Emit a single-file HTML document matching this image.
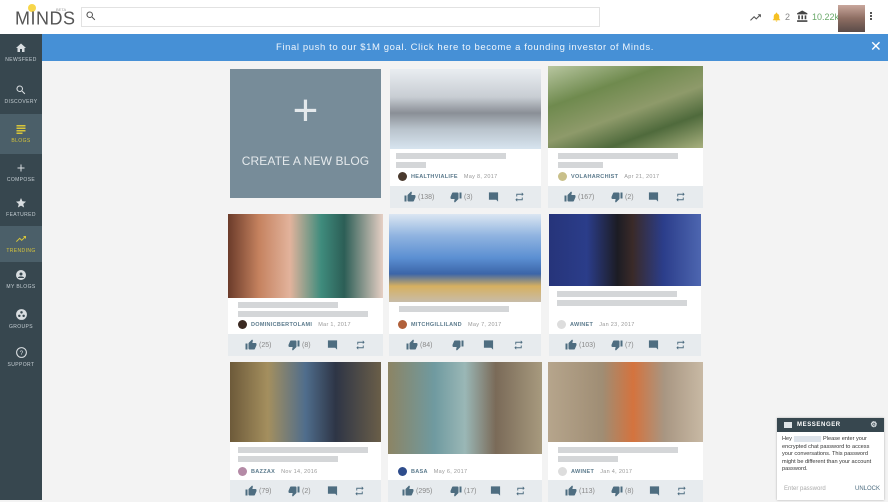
<!DOCTYPE html>
<html><head><meta charset="utf-8"><style>
*{margin:0;padding:0;box-sizing:border-box}
body{width:888px;height:500px;overflow:hidden;background:#f3f3f3;font-family:"Liberation Sans",sans-serif;position:relative}
.abs{position:absolute}
#top{left:0;top:0;width:888px;height:34px;background:#fff}
#side{left:0;top:34px;width:42px;height:466px;background:#37474f}
.nav{position:absolute;left:0;width:42px;text-align:center;color:#c5ced3;font-size:5px;letter-spacing:.4px}
.nav.on{background:#4b5f69;color:#d7c53a}
.nav svg{display:block;margin:0 auto 3px}
#banner{left:42px;top:34px;width:846px;height:27px;background:#4690d6;color:#eef5fc;font-size:9.5px;text-align:center;line-height:27px;letter-spacing:.6px}
.card{position:absolute;background:#fff}
.img{position:absolute;left:0;top:0;width:100%}
.bar{position:absolute;height:6px;background:#d4d6d8}
.auth{position:absolute;font-size:5.5px;font-weight:bold;color:#5b7a8c;letter-spacing:.3px;white-space:nowrap}
.auth span{font-weight:normal;color:#999;margin-left:6px}
.auth i{display:inline-block;width:9px;height:9px;border-radius:50%;vertical-align:middle;margin-right:4px}
.act{position:absolute;left:0;width:100%;background:#e7ebee;font-size:7px;color:#888}
.act div{position:absolute;top:50%;transform:translateY(-50%);white-space:nowrap;display:flex;align-items:center}
.act svg{fill:#4e6d80;margin-right:2px}
</style></head><body>
<div id="top" class="abs">
  <div class="abs" style="left:28px;top:4px;width:8px;height:8px;border-radius:50%;background:#f7d64a"></div>
  <div class="abs" style="left:15px;top:8px;font-size:18px;color:#555;letter-spacing:.5px;font-weight:300;transform:scaleY(1.05)">MINDS</div>
  <div class="abs" style="left:56px;top:7px;font-size:4px;color:#999">BETA</div>
  <div class="abs" style="left:81px;top:7px;width:519px;height:20px;border:1px solid #e2e2e2;background:#fff"></div>
  <svg class="abs" style="left:85px;top:10px" width="12" height="12" viewBox="0 0 24 24"><path fill="#555" d="M15.5 14h-.8l-.3-.3A6.5 6.5 0 1 0 9.5 16a6.5 6.5 0 0 0 4.2-1.6l.3.3v.8l5 5 1.5-1.5-5-5zm-6 0a4.5 4.5 0 1 1 0-9 4.5 4.5 0 0 1 0 9z"/></svg>
  <svg class="abs" style="left:749px;top:11px" width="13" height="13" viewBox="0 0 24 24"><path fill="#555" d="M16 6l2.3 2.3-4.9 4.9-4-4L2 16.6 3.4 18l6-6 4 4 6.3-6.3L22 12V6z"/></svg>
  <svg class="abs" style="left:771px;top:11px" width="11" height="12" viewBox="0 0 24 24"><path fill="#f5c023" d="M12 22a2 2 0 0 0 2-2h-4a2 2 0 0 0 2 2zm6-6v-5c0-3-1.6-5.6-4.5-6.3V4a1.5 1.5 0 0 0-3 0v.7C7.6 5.4 6 8 6 11v5l-2 2v1h16v-1z"/></svg>
  <div class="abs" style="left:785px;top:12px;font-size:9px;color:#888">2</div>
  <svg class="abs" style="left:796px;top:10px" width="13" height="13" viewBox="0 0 24 24"><path fill="#444" d="M4 10v7h3v-7zm6 0v7h3v-7zM2 22h19v-3H2zm14-12v7h3v-7zM11.5 1L2 6v2h19V6z"/></svg>
  <div class="abs" style="left:812px;top:12px;font-size:9px;color:#6aa96a">10.22k</div>
  <div class="abs" style="left:838px;top:5px;width:27px;height:27px;background:linear-gradient(#c9a79c,#8d6d62 50%,#5a4b48)"></div>
  <div class="abs" style="left:870px;top:12px;width:2px;height:2px;background:#555;box-shadow:0 3px #555,0 6px #555"></div>
</div>
<div id="side" class="abs">
  <div class="nav" style="top:8px;height:40px"><svg width="12" height="12" viewBox="0 0 24 24"><path fill="#d9dee1" d="M10 20v-6h4v6h5v-8h3L12 3 2 12h3v8z"/></svg>NEWSFEED</div>
  <div class="nav" style="top:48px;height:40px;padding-top:2px"><svg width="12" height="12" viewBox="0 0 24 24"><path fill="#d9dee1" d="M15.5 14h-.8l-.3-.3A6.5 6.5 0 1 0 9.5 16a6.5 6.5 0 0 0 4.2-1.6l.3.3v.8l5 5 1.5-1.5-5-5zm-6 0a4.5 4.5 0 1 1 0-9 4.5 4.5 0 0 1 0 9z"/></svg>DISCOVERY</div>
  <div class="nav on" style="top:80px;height:40px;padding-top:9px"><svg width="12" height="12" viewBox="0 0 24 24"><path fill="#d7c53a" d="M3 4h18v3H3zm0 5h18v3H3zm0 5h18v3H3zm0 5h12v3H3z"/></svg>BLOGS</div>
  <div class="nav" style="top:120px;height:36px;padding-top:8px"><svg width="12" height="12" viewBox="0 0 24 24"><path fill="#d9dee1" d="M19 13h-6v6h-2v-6H5v-2h6V5h2v6h6z"/></svg>COMPOSE</div>
  <div class="nav" style="top:156px;height:36px;padding-top:7px"><svg width="12" height="12" viewBox="0 0 24 24"><path fill="#d9dee1" d="M12 17.3L18.2 21l-1.6-7L22 9.2l-7.2-.6L12 2 9.2 8.6 2 9.2 7.5 14l-1.7 7z"/></svg>FEATURED</div>
  <div class="nav on" style="top:192px;height:36px;padding-top:7px"><svg width="12" height="12" viewBox="0 0 24 24"><path fill="#d7c53a" d="M16 6l2.3 2.3-4.9 4.9-4-4L2 16.6 3.4 18l6-6 4 4 6.3-6.3L22 12V6z"/></svg>TRENDING</div>
  <div class="nav" style="top:228px;height:36px;padding-top:7px"><svg width="12" height="12" viewBox="0 0 24 24"><circle cx="12" cy="12" r="10" fill="#d9dee1"/><circle cx="12" cy="10" r="3" fill="#37474f"/><path fill="#37474f" d="M6 17c2-3 10-3 12 0v1H6z"/></svg>MY BLOGS</div>
  <div class="nav" style="top:264px;height:40px;padding-top:10px"><svg width="13" height="13" viewBox="0 0 24 24"><circle cx="12" cy="12" r="10" fill="#d9dee1"/><circle cx="12" cy="8" r="2.3" fill="#37474f"/><circle cx="8" cy="14.5" r="2.3" fill="#37474f"/><circle cx="16" cy="14.5" r="2.3" fill="#37474f"/></svg>GROUPS</div>
  <div class="nav" style="top:304px;height:40px;padding-top:8px"><svg width="13" height="13" viewBox="0 0 24 24"><circle cx="12" cy="12" r="9" fill="none" stroke="#d9dee1" stroke-width="2"/><text x="12" y="16.5" font-size="12" text-anchor="middle" fill="#d9dee1" font-family="Liberation Sans">?</text></svg>SUPPORT</div>
</div>
<div id="banner" class="abs">Final push to our $1M goal. Click here to become a founding investor of Minds.</div>
<div class="abs" style="left:870px;top:38px;color:#fff;font-size:14px">✕</div>

<div class="abs" style="left:230px;top:69px;width:151px;height:129px;background:#778c99;color:#e4e9ec;text-align:center">
  <div style="font-size:44px;line-height:44px;margin-top:20px;font-weight:300">+</div>
  <div style="font-size:12px;margin-top:21px;letter-spacing:.1px">CREATE A NEW BLOG</div>
</div>

<div class="card" style="left:390px;top:69px;width:151px;height:139px">
  <div class="img" style="height:80px;background:linear-gradient(180deg,#e9edf1 0,#c8cdd3 35%,#8a8f96 55%,#b9c3cc 75%,#d7e4ef)"></div>
  <div class="bar" style="left:6px;top:84px;width:110px"></div><div class="bar" style="left:6px;top:93px;width:30px"></div>
  <div class="auth" style="left:8px;top:103px"><i style="background:#4a3a2e"></i>HEALTHVIALIFE<span>May 8, 2017</span></div>
  <div class="act" style="top:117px;height:22px"><div style="left:14px"><svg width="12" height="12" viewBox="0 0 24 24"><path d="M1 21h4V9H1zm22-11a2 2 0 0 0-2-2h-6.3l1-4.6v-.3a1.5 1.5 0 0 0-.5-1L14.2 1 7.6 7.6A2 2 0 0 0 7 9v10a2 2 0 0 0 2 2h9a2 2 0 0 0 1.8-1.2l3-7c.1-.3.2-.5.2-.8z"/></svg>(138)</div><div style="left:60px"><svg width="12" height="12" viewBox="0 0 24 24"><path d="M15 3H6a2 2 0 0 0-1.8 1.2l-3 7c-.1.3-.2.5-.2.8v2a2 2 0 0 0 2 2h6.3l-1 4.6v.3c0 .4.2.8.4 1.1l1.1 1 6.6-6.6A2 2 0 0 0 17 15V5a2 2 0 0 0-2-2zm4 0v12h4V3z"/></svg>(3)</div><div style="left:98px"><svg width="11" height="11" viewBox="0 0 24 24"><path d="M22 2H2v16h16l4 4z"/></svg></div><div style="left:124px"><svg width="11" height="11" viewBox="0 0 24 24"><path d="M7 7h10v3l4-4-4-4v3H5v6h2zm10 10H7v-3l-4 4 4 4v-3h12v-6h-2z"/></svg></div></div>
</div>

<div class="card" style="left:548px;top:66px;width:155px;height:142px">
  <div class="img" style="height:82px;background:linear-gradient(160deg,#b8c6a0,#6f8a4e 30%,#8e9a6a 55%,#4f6a3c 75%,#a8b07e)"></div>
  <div class="bar" style="left:10px;top:87px;width:120px"></div><div class="bar" style="left:10px;top:96px;width:45px"></div>
  <div class="auth" style="left:10px;top:106px"><i style="background:#c9c08a"></i>VOLAHARCHIST<span>Apr 21, 2017</span></div>
  <div class="act" style="top:120px;height:22px"><div style="left:16px"><svg width="12" height="12" viewBox="0 0 24 24"><path d="M1 21h4V9H1zm22-11a2 2 0 0 0-2-2h-6.3l1-4.6v-.3a1.5 1.5 0 0 0-.5-1L14.2 1 7.6 7.6A2 2 0 0 0 7 9v10a2 2 0 0 0 2 2h9a2 2 0 0 0 1.8-1.2l3-7c.1-.3.2-.5.2-.8z"/></svg>(167)</div><div style="left:63px"><svg width="12" height="12" viewBox="0 0 24 24"><path d="M15 3H6a2 2 0 0 0-1.8 1.2l-3 7c-.1.3-.2.5-.2.8v2a2 2 0 0 0 2 2h6.3l-1 4.6v.3c0 .4.2.8.4 1.1l1.1 1 6.6-6.6A2 2 0 0 0 17 15V5a2 2 0 0 0-2-2zm4 0v12h4V3z"/></svg>(2)</div><div style="left:100px"><svg width="11" height="11" viewBox="0 0 24 24"><path d="M22 2H2v16h16l4 4z"/></svg></div><div style="left:127px"><svg width="11" height="11" viewBox="0 0 24 24"><path d="M7 7h10v3l4-4-4-4v3H5v6h2zm10 10H7v-3l-4 4 4 4v-3h12v-6h-2z"/></svg></div></div>
</div>

<div class="card" style="left:228px;top:214px;width:155px;height:142px">
  <div class="img" style="height:84px;background:linear-gradient(90deg,#6b3b2a,#c5825f 20%,#e2b39c 40%,#3f8c7d 60%,#2c5e56 75%,#e6cfc4)"></div>
  <div class="bar" style="left:10px;top:88px;width:100px"></div><div class="bar" style="left:10px;top:97px;width:130px"></div>
  <div class="auth" style="left:10px;top:106px"><i style="background:#3b2a22"></i>DOMINICBERTOLAMI<span>Mar 1, 2017</span></div>
  <div class="act" style="top:120px;height:22px"><div style="left:17px"><svg width="12" height="12" viewBox="0 0 24 24"><path d="M1 21h4V9H1zm22-11a2 2 0 0 0-2-2h-6.3l1-4.6v-.3a1.5 1.5 0 0 0-.5-1L14.2 1 7.6 7.6A2 2 0 0 0 7 9v10a2 2 0 0 0 2 2h9a2 2 0 0 0 1.8-1.2l3-7c.1-.3.2-.5.2-.8z"/></svg>(25)</div><div style="left:60px"><svg width="12" height="12" viewBox="0 0 24 24"><path d="M15 3H6a2 2 0 0 0-1.8 1.2l-3 7c-.1.3-.2.5-.2.8v2a2 2 0 0 0 2 2h6.3l-1 4.6v.3c0 .4.2.8.4 1.1l1.1 1 6.6-6.6A2 2 0 0 0 17 15V5a2 2 0 0 0-2-2zm4 0v12h4V3z"/></svg>(8)</div><div style="left:99px"><svg width="11" height="11" viewBox="0 0 24 24"><path d="M22 2H2v16h16l4 4z"/></svg></div><div style="left:127px"><svg width="11" height="11" viewBox="0 0 24 24"><path d="M7 7h10v3l4-4-4-4v3H5v6h2zm10 10H7v-3l-4 4 4 4v-3h12v-6h-2z"/></svg></div></div>
</div>

<div class="card" style="left:389px;top:214px;width:152px;height:142px">
  <div class="img" style="height:88px;background:linear-gradient(180deg,#dbe6f2,#8fb3e0 25%,#5b8fd2 50%,#3c65a8 68%,#d6b060 82%,#c8bca8)"></div>
  <div class="bar" style="left:10px;top:92px;width:110px"></div>
  <div class="auth" style="left:9px;top:106px"><i style="background:#b0603a"></i>MITCHGILLILAND<span>May 7, 2017</span></div>
  <div class="act" style="top:120px;height:22px"><div style="left:17px"><svg width="12" height="12" viewBox="0 0 24 24"><path d="M1 21h4V9H1zm22-11a2 2 0 0 0-2-2h-6.3l1-4.6v-.3a1.5 1.5 0 0 0-.5-1L14.2 1 7.6 7.6A2 2 0 0 0 7 9v10a2 2 0 0 0 2 2h9a2 2 0 0 0 1.8-1.2l3-7c.1-.3.2-.5.2-.8z"/></svg>(84)</div><div style="left:63px"><svg width="12" height="12" viewBox="0 0 24 24"><path d="M15 3H6a2 2 0 0 0-1.8 1.2l-3 7c-.1.3-.2.5-.2.8v2a2 2 0 0 0 2 2h6.3l-1 4.6v.3c0 .4.2.8.4 1.1l1.1 1 6.6-6.6A2 2 0 0 0 17 15V5a2 2 0 0 0-2-2zm4 0v12h4V3z"/></svg></div><div style="left:94px"><svg width="11" height="11" viewBox="0 0 24 24"><path d="M22 2H2v16h16l4 4z"/></svg></div><div style="left:124px"><svg width="11" height="11" viewBox="0 0 24 24"><path d="M7 7h10v3l4-4-4-4v3H5v6h2zm10 10H7v-3l-4 4 4 4v-3h12v-6h-2z"/></svg></div></div>
</div>

<div class="card" style="left:549px;top:214px;width:152px;height:142px">
  <div class="img" style="height:72px;background:linear-gradient(90deg,#26347a,#2b3d8a 25%,#1c1c24 45%,#3a2a28 55%,#2b3d8a 75%,#4d66b0)"></div>
  <div class="bar" style="left:8px;top:77px;width:120px"></div><div class="bar" style="left:8px;top:86px;width:130px"></div>
  <div class="auth" style="left:8px;top:106px"><i style="background:#ddd"></i>AWINET<span>Jan 23, 2017</span></div>
  <div class="act" style="top:120px;height:22px"><div style="left:16px"><svg width="12" height="12" viewBox="0 0 24 24"><path d="M1 21h4V9H1zm22-11a2 2 0 0 0-2-2h-6.3l1-4.6v-.3a1.5 1.5 0 0 0-.5-1L14.2 1 7.6 7.6A2 2 0 0 0 7 9v10a2 2 0 0 0 2 2h9a2 2 0 0 0 1.8-1.2l3-7c.1-.3.2-.5.2-.8z"/></svg>(103)</div><div style="left:62px"><svg width="12" height="12" viewBox="0 0 24 24"><path d="M15 3H6a2 2 0 0 0-1.8 1.2l-3 7c-.1.3-.2.5-.2.8v2a2 2 0 0 0 2 2h6.3l-1 4.6v.3c0 .4.2.8.4 1.1l1.1 1 6.6-6.6A2 2 0 0 0 17 15V5a2 2 0 0 0-2-2zm4 0v12h4V3z"/></svg>(7)</div><div style="left:99px"><svg width="11" height="11" viewBox="0 0 24 24"><path d="M22 2H2v16h16l4 4z"/></svg></div><div style="left:126px"><svg width="11" height="11" viewBox="0 0 24 24"><path d="M7 7h10v3l4-4-4-4v3H5v6h2zm10 10H7v-3l-4 4 4 4v-3h12v-6h-2z"/></svg></div></div>
</div>

<div class="card" style="left:230px;top:362px;width:151px;height:138px">
  <div class="img" style="height:80px;background:linear-gradient(90deg,#6d5a3a,#a48f5e 25%,#4f6d8c 50%,#2e3546 70%,#6a5e48)"></div>
  <div class="bar" style="left:8px;top:85px;width:130px"></div><div class="bar" style="left:8px;top:94px;width:100px"></div>
  <div class="auth" style="left:8px;top:105px"><i style="background:#b48aa6"></i>BAZZAX<span>Nov 14, 2016</span></div>
  <div class="act" style="top:118px;height:22px"><div style="left:15px"><svg width="12" height="12" viewBox="0 0 24 24"><path d="M1 21h4V9H1zm22-11a2 2 0 0 0-2-2h-6.3l1-4.6v-.3a1.5 1.5 0 0 0-.5-1L14.2 1 7.6 7.6A2 2 0 0 0 7 9v10a2 2 0 0 0 2 2h9a2 2 0 0 0 1.8-1.2l3-7c.1-.3.2-.5.2-.8z"/></svg>(79)</div><div style="left:58px"><svg width="12" height="12" viewBox="0 0 24 24"><path d="M15 3H6a2 2 0 0 0-1.8 1.2l-3 7c-.1.3-.2.5-.2.8v2a2 2 0 0 0 2 2h6.3l-1 4.6v.3c0 .4.2.8.4 1.1l1.1 1 6.6-6.6A2 2 0 0 0 17 15V5a2 2 0 0 0-2-2zm4 0v12h4V3z"/></svg>(2)</div><div style="left:97px"><svg width="11" height="11" viewBox="0 0 24 24"><path d="M22 2H2v16h16l4 4z"/></svg></div><div style="left:124px"><svg width="11" height="11" viewBox="0 0 24 24"><path d="M7 7h10v3l4-4-4-4v3H5v6h2zm10 10H7v-3l-4 4 4 4v-3h12v-6h-2z"/></svg></div></div>
</div>

<div class="card" style="left:388px;top:362px;width:154px;height:138px">
  <div class="img" style="height:92px;background:linear-gradient(90deg,#8c8464,#6f9aa0 30%,#9ab7b6 50%,#7a6a58 70%,#a79a7e)"></div>
  <div class="auth" style="left:10px;top:105px"><i style="background:#2f4d8c"></i>BASA<span>May 6, 2017</span></div>
  <div class="act" style="top:118px;height:22px"><div style="left:14px"><svg width="12" height="12" viewBox="0 0 24 24"><path d="M1 21h4V9H1zm22-11a2 2 0 0 0-2-2h-6.3l1-4.6v-.3a1.5 1.5 0 0 0-.5-1L14.2 1 7.6 7.6A2 2 0 0 0 7 9v10a2 2 0 0 0 2 2h9a2 2 0 0 0 1.8-1.2l3-7c.1-.3.2-.5.2-.8z"/></svg>(295)</div><div style="left:62px"><svg width="12" height="12" viewBox="0 0 24 24"><path d="M15 3H6a2 2 0 0 0-1.8 1.2l-3 7c-.1.3-.2.5-.2.8v2a2 2 0 0 0 2 2h6.3l-1 4.6v.3c0 .4.2.8.4 1.1l1.1 1 6.6-6.6A2 2 0 0 0 17 15V5a2 2 0 0 0-2-2zm4 0v12h4V3z"/></svg>(17)</div><div style="left:102px"><svg width="11" height="11" viewBox="0 0 24 24"><path d="M22 2H2v16h16l4 4z"/></svg></div><div style="left:127px"><svg width="11" height="11" viewBox="0 0 24 24"><path d="M7 7h10v3l4-4-4-4v3H5v6h2zm10 10H7v-3l-4 4 4 4v-3h12v-6h-2z"/></svg></div></div>
</div>

<div class="card" style="left:548px;top:362px;width:155px;height:138px">
  <div class="img" style="height:80px;background:linear-gradient(90deg,#b6a58c,#9f8d74 35%,#d4733e 55%,#a89682 75%,#c8b9a4)"></div>
  <div class="bar" style="left:10px;top:85px;width:120px"></div><div class="bar" style="left:10px;top:94px;width:60px"></div>
  <div class="auth" style="left:10px;top:105px"><i style="background:#ddd"></i>AWINET<span>Jan 4, 2017</span></div>
  <div class="act" style="top:118px;height:22px"><div style="left:17px"><svg width="12" height="12" viewBox="0 0 24 24"><path d="M1 21h4V9H1zm22-11a2 2 0 0 0-2-2h-6.3l1-4.6v-.3a1.5 1.5 0 0 0-.5-1L14.2 1 7.6 7.6A2 2 0 0 0 7 9v10a2 2 0 0 0 2 2h9a2 2 0 0 0 1.8-1.2l3-7c.1-.3.2-.5.2-.8z"/></svg>(113)</div><div style="left:63px"><svg width="12" height="12" viewBox="0 0 24 24"><path d="M15 3H6a2 2 0 0 0-1.8 1.2l-3 7c-.1.3-.2.5-.2.8v2a2 2 0 0 0 2 2h6.3l-1 4.6v.3c0 .4.2.8.4 1.1l1.1 1 6.6-6.6A2 2 0 0 0 17 15V5a2 2 0 0 0-2-2zm4 0v12h4V3z"/></svg>(8)</div><div style="left:101px"><svg width="11" height="11" viewBox="0 0 24 24"><path d="M22 2H2v16h16l4 4z"/></svg></div><div style="left:128px"><svg width="11" height="11" viewBox="0 0 24 24"><path d="M7 7h10v3l4-4-4-4v3H5v6h2zm10 10H7v-3l-4 4 4 4v-3h12v-6h-2z"/></svg></div></div>
</div>

<div class="abs" style="left:777px;top:418px;width:107px;height:82px;background:#fff;box-shadow:0 0 2px rgba(0,0,0,.3)">
  <div style="height:14px;background:#37474f;color:#fff;font-size:6px;font-weight:bold;letter-spacing:.6px;line-height:14px;padding-left:20px;position:relative">MESSENGER
    <div style="position:absolute;left:7px;top:4px;width:8px;height:6px;background:#dfe4e7"></div>
    <div style="position:absolute;right:6px;top:0;font-size:8px;color:#dfe4e7">⚙</div></div>
  <div style="padding:4px 5px;font-size:5.6px;line-height:7.5px;color:#333">Hey <span style="background:#dde3ea;color:#dde3ea">xxxxxxxxxx</span> Please enter your encrypted chat password to access your conversations. This password might be different than your account password.</div>
  <div style="position:absolute;left:7px;top:68px;font-size:6px;color:#aaa">Enter password</div>
  <div style="position:absolute;right:4px;top:68px;font-size:6px;color:#4e6d80">UNLOCK</div>
</div>
</body></html>
